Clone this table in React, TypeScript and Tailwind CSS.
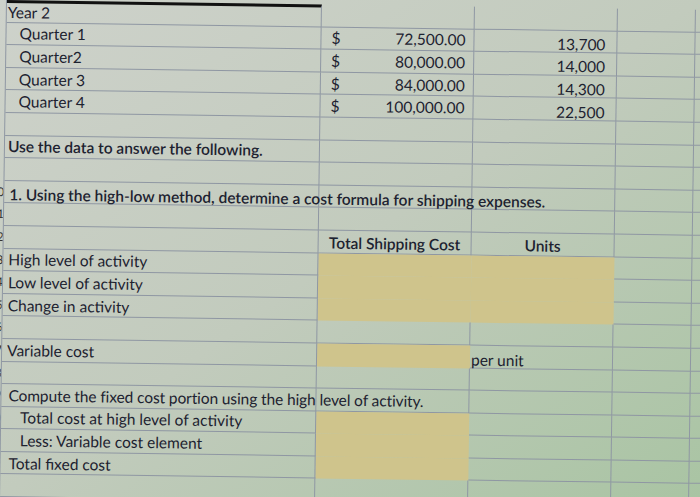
import React from "react";

type Row = {
  a?: React.ReactNode;
  b?: React.ReactNode;
  c?: React.ReactNode;
  fillB?: boolean;
  fillC?: boolean;
  thick?: boolean;
};

const quarters = [
  { label: "Quarter 1", cost: "72,500.00", units: "13,700" },
  { label: "Quarter2", cost: "80,000.00", units: "14,000" },
  { label: "Quarter 3", cost: "84,000.00", units: "14,300" },
  { label: "Quarter 4", cost: "100,000.00", units: "22,500" },
];

const rows: Row[] = [
  { a: <span className="pl-[1px]">Year 2</span>, thick: true },
  ...quarters.map((q) => ({
    a: <span className="pl-[13px]">{q.label}</span>,
    b: (
      <div className="flex w-full justify-between pl-[10px] pr-[8px]">
        <span>$</span>
        <span>{q.cost}</span>
      </div>
    ),
    c: <div className="w-full pt-[5px] pr-[11px] text-right">{q.units}</div>,
  })),
  {},
  { a: <span className="pl-[3px] font-semibold">Use the data to answer the following.</span> },
  {},
  {
    a: (
      <span className="block pt-[5px] pl-[5px] font-semibold">
        1. Using the high-low method, determine a cost formula for shipping expenses.
      </span>
    ),
  },
  {},
  {
    b: <div className="w-full pt-[3px] text-center font-semibold">Total Shipping Cost</div>,
    c: <div className="w-full pt-[3px] text-center font-semibold">Units</div>,
  },
  { a: <span className="pl-[5px]">High level of activity</span>, fillB: true, fillC: true },
  { a: <span className="pl-[5px]">Low level of activity</span>, fillB: true, fillC: true },
  { a: <span className="pl-[5px]">Change in activity</span>, fillB: true, fillC: true },
  {},
  {
    a: <span className="pl-[5px]">Variable cost</span>,
    fillB: true,
    c: <span className="pl-[1px] pt-[6px]">per unit</span>,
  },
  {},
  {
    a: (
      <span className="block pl-[7px] tracking-[-0.1px]">
        Compute the fixed cost portion using the high level of activity.
      </span>
    ),
  },
  { a: <span className="pl-[19px]">Total cost at high level of activity</span>, fillB: true },
  { a: <span className="pl-[19px]">Less: Variable cost element</span>, fillB: true },
  { a: <span className="pl-[8px]">Total fixed cost</span>, fillB: true },
  {},
];

const line = "border-[#8f97a3]";
const fill = "bg-[#cfc48c]";

export default function App() {
  return (
    <div
      className="relative h-[497px] w-[700px] overflow-hidden bg-linear-to-br from-[#ced2cb] via-[#c2cbbd] to-[#a9c4a3] text-[15.5px] leading-[18px] text-[#1d2230]"
      style={{ fontFamily: "Lato, 'Open Sans', sans-serif" }}
    >
      <div className="w-[780px] origin-top-left rotate-[0.8deg]">
        {rows.map((r, i) => (
          <div key={i} className="flex h-[22.6px]">
            {/* row header, mostly cut off by the photo */}
            <div
              className={`w-[7px] shrink-0 overflow-hidden border-r ${line} text-right text-[12px] leading-[22px] text-[#333]`}
            >
              {i >= 8 ? (i + 2) % 10 : ""}
            </div>
            <div
              className={`relative flex w-[315px] shrink-0 items-center whitespace-nowrap border-b border-r ${line} ${
                r.thick ? "border-t-[3px] border-t-[#111]" : ""
              }`}
            >
              <div className="relative z-10">{r.a}</div>
            </div>
            <div
              className={`flex w-[153px] shrink-0 items-center whitespace-nowrap border-b border-r ${
                r.fillB ? `${fill} border-transparent` : line
              }`}
            >
              {r.b}
            </div>
            <div
              className={`flex w-[143px] shrink-0 items-center whitespace-nowrap border-b border-r ${
                r.fillC ? `${fill} border-transparent` : line
              }`}
            >
              {r.c}
            </div>
            <div className={`w-[78px] shrink-0 border-b border-r ${line}`} />
            <div className={`w-[78px] shrink-0 border-b border-r ${line}`} />
          </div>
        ))}
      </div>
    </div>
  );
}
